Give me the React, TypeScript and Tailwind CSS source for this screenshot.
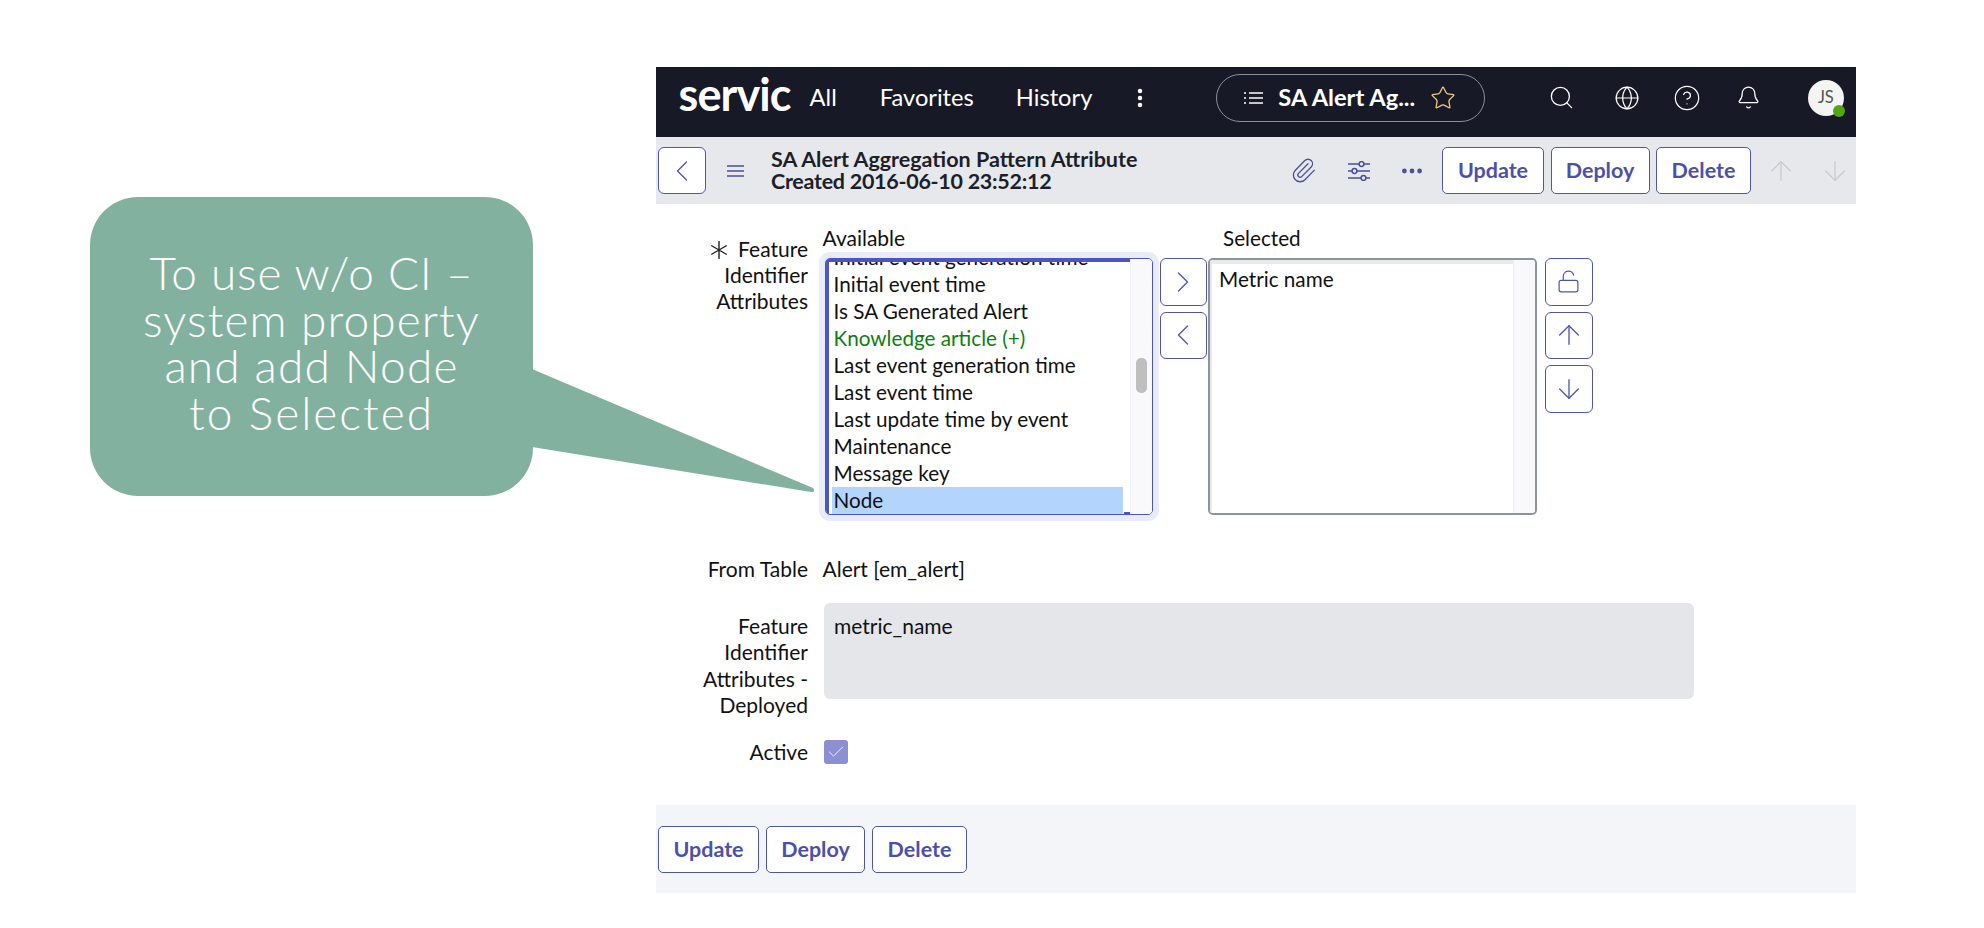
import { ArrowDown, ArrowUp, Bell, Check, ChevronLeft, ChevronRight, CircleHelp, Ellipsis, EllipsisVertical, Globe, LockOpen, Paperclip, Search, Star } from "lucide-react";
import type { ReactNode } from "react";

const items = [
    "Initial event time",
    "Is SA Generated Alert",
    "Knowledge article (+)",
    "Last event generation time",
    "Last event time",
    "Last update time by event",
    "Maintenance",
    "Message key",
];

const ActionButton = ({ label, width }: { label: string; width: string }) => (
    <button className={`h-[47px] ${width} rounded-[5px] border-[1.5px] border-[#5055ac] bg-white text-[21.5px] font-bold text-[#4c50a8]`}>
        {label}
    </button>
);

const IconButton = ({ children }: { children: ReactNode }) => (
    <button className="flex h-[47.5px] w-[47.5px] items-center justify-center rounded-[6px] border-[1.5px] border-[#5055ac] bg-white text-[#5055ac]">
        {children}
    </button>
);

const ListIcon = () => (
    <svg width="19" height="14" viewBox="0 0 19 14" stroke="white" strokeWidth="1.3">
        <path d="M5 2h14M5 7h14M5 12h14M0 2h2M0 7h2M0 12h2" />
    </svg>
);

const HamburgerIcon = () => (
    <svg width="17" height="12" viewBox="0 0 17 12" stroke="#4a4e9c" strokeWidth="1.5">
        <path d="M0 1h17M0 6h17M0 11h17" />
    </svg>
);

const SlidersIcon = () => (
    <svg width="22" height="20" viewBox="0 0 22 20" fill="none" stroke="#4a4e9c" strokeWidth="1.5">
        <path d="M0 3h11M16 3h6M0 10h4M9 10h13M0 17h13M18 17h4" />
        <circle cx="13.5" cy="3" r="2.4" />
        <circle cx="6.5" cy="10" r="2.4" />
        <circle cx="15.5" cy="17" r="2.4" />
    </svg>
);

const RequiredMark = () => (
    <svg width="18" height="18" viewBox="0 0 18 18" stroke="#222" strokeWidth="1.4" className="mr-[10px] inline-block align-[-2px]">
        <path d="M9 0v18M1.2 4.5l15.6 9M16.8 4.5l-15.6 9" />
    </svg>
);

const Callout = () => (
    <div className="absolute left-[90px] top-[197px] flex h-[299px] w-[443px] flex-col items-center rounded-[48px] bg-[#82b29f] pt-[53px] text-center text-[46px] leading-[46.7px] font-light text-white">
        <svg width="285" height="128" viewBox="0 0 285 128" className="absolute left-[442px] top-[172px]" fill="#82b29f">
            <path d="M0 0 281 119Q284 123 279 123L0 78Z" />
        </svg>
        <span className="tracking-[0.8px]">To use w/o CI –</span>
        <span className="tracking-[1.05px]">system property</span>
        <span className="tracking-[1.2px]">and add Node</span>
        <span className="tracking-[2px]">to Selected</span>
    </div>
);

export default function App() {
    return (
        <div className="relative h-[928px] w-[1984px] overflow-hidden bg-white font-['Lato',sans-serif] text-[21px] text-[#111]">
            <Callout />
            <div className="ml-[655.5px] flex w-[1200.5px] flex-col pt-[67px]">
                {/* top nav */}
                <div className="flex h-[70px] items-center bg-[#181926] pb-[9px] text-white">
                    <span className="ml-[23px] mb-[7px] text-[45px] leading-none font-bold tracking-[-0.02em]">servic</span>
                    <span className="ml-[19px] text-[23.7px]">All</span>
                    <span className="ml-[43px] text-[23.7px]">Favorites</span>
                    <span className="ml-[42px] text-[23.7px]">History</span>
                    <EllipsisVertical className="ml-[36px]" size={24} strokeWidth={2.5} />
                    <div className="ml-[64px] flex h-[48px] w-[269px] items-center rounded-full border-[1.5px] border-[#8d8e96] pl-[27px]">
                        <ListIcon />
                        <span className="ml-[15px] text-[23.7px] font-bold">SA Alert Ag...</span>
                        <Star className="ml-[15px] text-[#eccb82]" size={26} strokeWidth={1.2} />
                    </div>
                    <Search className="ml-[63px]" size={27} strokeWidth={1.15} />
                    <Globe className="ml-[39px]" size={26} strokeWidth={1.15} />
                    <CircleHelp className="ml-[32.5px]" size={28} strokeWidth={1.05} />
                    <Bell className="ml-[35px]" size={25} strokeWidth={1.15} />
                    <div className="relative ml-[47px] flex h-[36px] w-[36px] items-center justify-center rounded-full bg-[#f4f4f2] text-[16.5px] text-[#555]">
                        JS
                        <span className="absolute -right-[1px] -bottom-[1px] h-[12px] w-[12px] rounded-full bg-[#51a517]" />
                    </div>
                </div>
                {/* record header */}
                <div className="flex h-[67px] items-center bg-[#e6e8ec]">
                    <button className="ml-[2.5px] flex h-[47px] w-[48px] items-center justify-center rounded-[6px] border-[1.5px] border-[#5055ac] bg-white text-[#5055ac]">
                        <ChevronLeft size={36} strokeWidth={0.9} />
                    </button>
                    <span className="ml-[21px]"><HamburgerIcon /></span>
                    <div className="ml-[27px] pb-[2px] text-[21.5px] leading-[22px] font-bold text-[#1e1e28]">
                        <div>SA Alert Aggregation Pattern Attribute</div>
                        <div className="tracking-[-0.28px]">Created 2016-06-10 23:52:12</div>
                    </div>
                    <Paperclip className="ml-auto text-[#4a4e9c]" size={27} strokeWidth={1.15} />
                    <span className="ml-[31px]"><SlidersIcon /></span>
                    <Ellipsis className="ml-[29px] text-[#4a4e9c]" size={26} strokeWidth={2.4} />
                    <div className="ml-[17px] flex gap-[6.5px]">
                        <ActionButton label="Update" width="w-[102px]" />
                        <ActionButton label="Deploy" width="w-[99px]" />
                        <ActionButton label="Delete" width="w-[95px]" />
                    </div>
                    <ArrowUp className="ml-[14px] text-[#c6c8d0]" size={32} strokeWidth={0.9} />
                    <ArrowDown className="mr-[5px] ml-[22px] text-[#c6c8d0]" size={32} strokeWidth={0.9} />
                </div>
                {/* slushbucket */}
                <div className="flex pt-[21px]">
                    <div className="w-[152.5px] pt-[10.5px] text-right leading-[26.4px]">
                        <div><RequiredMark />Feature</div>
                        <div>Identifier</div>
                        <div>Attributes</div>
                    </div>
                    <div className="ml-[14.5px] w-[330px]">
                        <div className="h-[33px] leading-[26px]">Available</div>
                        <div className="relative ml-[2px] flex h-[257px] w-[328px] overflow-hidden rounded-[5px] border border-[#4c55c4] text-[20.7px] shadow-[0_0_0_6px_#e9ebf9]">
                            <div className="flex-1 overflow-hidden border-t-[3px] border-l-[3px] border-[#4c55c4]">
                                <div className="-mt-[18px] h-[27px] pl-[5px] leading-[27px]">Initial event generation time</div>
                                {items.map(item => (
                                    <div key={item} className={`h-[27px] pl-[5px] leading-[27px] ${item.startsWith("Knowledge") ? "text-[#0f7d12]" : ""}`}>
                                        {item}
                                    </div>
                                ))}
                                <div className="mr-[7px] ml-[3px] h-[27px] bg-[#b3d4fc] pl-[2px] leading-[27px]">Node</div>
                            </div>
                            <div className="w-[22px] border-l border-[#eeeff2] bg-[#f9f9fb] pt-[99px] pl-[5px]">
                                <div className="h-[35px] w-[11px] rounded-[5px] bg-[#bfbfbf]" />
                            </div>
                            <span className="absolute right-[22px] bottom-0 h-[2px] w-[6px] bg-[#4c55c4]" />
                        </div>
                    </div>
                    <div className="ml-[7px] flex flex-col gap-[6px] pt-[33px]">
                        <IconButton><ChevronRight size={36} strokeWidth={0.9} /></IconButton>
                        <IconButton><ChevronLeft size={36} strokeWidth={0.9} /></IconButton>
                    </div>
                    <div className="ml-[1px] w-[329px]">
                        <div className="h-[33px] pl-[15px] text-[20.7px] leading-[26px]">Selected</div>
                        <div className="flex h-[257px] overflow-hidden rounded-[5px] border-2 border-[#8f939c]">
                            <div className="flex-1 border-t-[4px] border-l-[2px] border-[#e9eaec] bg-white pt-[2px] pl-[7px] text-[20.7px] leading-[27px]">Metric name</div>
                            <div className="w-[22px] border-l border-[#eeeff2] bg-[#f9f9fb]" />
                        </div>
                    </div>
                    <div className="ml-[8px] flex flex-col gap-[6px] pt-[33px]">
                        <IconButton><LockOpen size={25} strokeWidth={1.15} /></IconButton>
                        <IconButton><ArrowUp size={32} strokeWidth={1} /></IconButton>
                        <IconButton><ArrowDown size={32} strokeWidth={1} /></IconButton>
                    </div>
                </div>
                {/* from table */}
                <div className="flex pt-[41px] leading-[26px]">
                    <div className="w-[152.5px] text-right">From Table</div>
                    <div className="ml-[14.5px]">Alert [em_alert]</div>
                </div>
                {/* deployed attributes */}
                <div className="flex pt-[21px] leading-[26.4px]">
                    <div className="w-[152.5px] pt-[10px] text-right">
                        Feature<br />Identifier<br />Attributes -<br />Deployed
                    </div>
                    <div className="ml-[16px] h-[96px] w-[870px] rounded-[6px] bg-[#e4e6e9] pt-[10px] pl-[10px]">metric_name</div>
                </div>
                {/* active */}
                <div className="flex items-center pt-[20.5px] leading-[26px]">
                    <div className="w-[152.5px] text-right">Active</div>
                    <div className="ml-[16px] flex h-[24px] w-[24px] items-center justify-center rounded-[3px] bg-[#8c90d3] text-white">
                        <Check size={20} strokeWidth={1} />
                    </div>
                </div>
                {/* footer */}
                <div className="mt-[40px] flex h-[88px] items-center gap-[7px] bg-[#f4f5f8] pl-[2.5px]">
                    <ActionButton label="Update" width="w-[101px]" />
                    <ActionButton label="Deploy" width="w-[99px]" />
                    <ActionButton label="Delete" width="w-[95px]" />
                </div>
            </div>
        </div>
    );
}
